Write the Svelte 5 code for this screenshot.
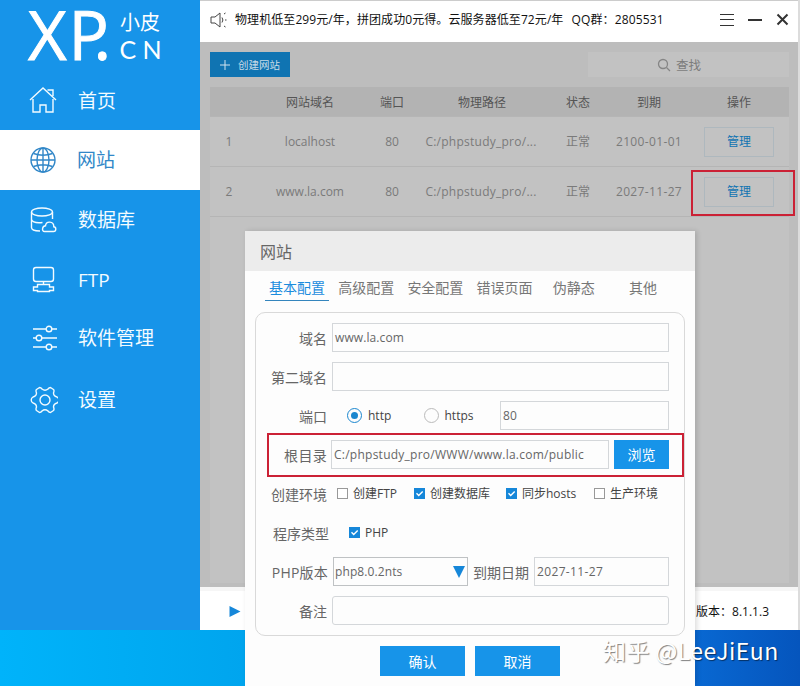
<script>
  const nav = [
    { id: 'home', label: '首页' },
    { id: 'site', label: '网站', active: true },
    { id: 'database', label: '数据库' },
    { id: 'ftp', label: 'FTP' },
    { id: 'software', label: '软件管理' },
    { id: 'settings', label: '设置' }
  ];

  const columns = ['', '网站域名', '端口', '物理路径', '状态', '到期', '操作'];

  const sites = [
    { id: 1, domain: 'localhost', port: 80, path: 'C:/phpstudy_pro/...', status: '正常', expires: '2100-01-01' },
    { id: 2, domain: 'www.la.com', port: 80, path: 'C:/phpstudy_pro/...', status: '正常', expires: '2027-11-27' }
  ];

  const tabs = ['基本配置', '高级配置', '安全配置', '错误页面', '伪静态', '其他'];

  const envs = [
    { label: '创建FTP', checked: false },
    { label: '创建数据库', checked: true },
    { label: '同步hosts', checked: true },
    { label: '生产环境', checked: false }
  ];

  let activeTab = $state(0);
  let protocol = $state('http');
</script>

{#snippet check(on)}
  <svg class="check" viewBox="0 0 11 11">
    {#if on}
      <rect width="11" height="11" fill="#1687d9" />
      <path d="M2.5 5.3 4.7 7.5 8.7 3.4" fill="none" stroke="#fff" stroke-width="1.4" />
    {:else}
      <rect x=".5" y=".5" width="10" height="10" fill="#fff" stroke="#999" />
    {/if}
  </svg>
{/snippet}

<div class="desktop">
  <div class="window">
    <aside class="sidebar">
      <svg class="logo" viewBox="0 0 200 70">
        <text class="xp" y="60"><tspan x="28">X</tspan><tspan x="68.500">P</tspan><tspan x="93.500">.</tspan></text>
        <text class="cn" x="120" y="30" textLength="40">小皮</text>
        <text class="latin" x="119.500" y="59" textLength="42">CN</text>
      </svg>
      <nav>
        {#each nav as item}
          <a class="item {item.id}" class:active={item.active} href="#{item.id}">
            <svg class="nav-icon" viewBox="0 0 30 30">
              {#if item.id === 'home'}
                <path d="M2 15 15 3l13 12M19.500 5h5.500v6M5 14v13h7v-7h6v7h7V14" />
              {:else if item.id === 'site'}
                <circle cx="15" cy="15" r="12" />
                <ellipse cx="15" cy="15" rx="6" ry="12" />
                <path d="M3 15h24M15 3v24M5.500 8.500Q15 12 24.500 8.500M5.500 21.500Q15 18 24.500 21.500" />
              {:else if item.id === 'database'}
                <ellipse cx="14" cy="7" rx="10.500" ry="4" />
                <path d="M3.500 7v15.500c0 2 3.500 3.500 8.500 3.500M24.500 7v7M3.500 14.500c1 3 6.500 3.500 11 3M16.500 26.500h9c3 0 3-4.500.3-4.700 0-6-7.800-6-8.300-1-3.500.2-4 5.700-1 5.700z" />
              {:else if item.id === 'ftp'}
                <rect x="5.500" y="2.500" width="20" height="14" rx="2.500" />
                <path d="M15.500 16.500v3M9.500 19.500h12v2.500h4v3.500h-4v1h-12v-1h-4V22h4z" />
              {:else if item.id === 'software'}
                <path d="M5 6h13M24 6h5M5 15h3M14 15h15M5 24h13M24 24h5" />
                <circle cx="21" cy="6" r="2.800" />
                <circle cx="11" cy="15" r="2.800" />
                <circle cx="21" cy="24" r="2.800" />
              {:else}
                <path d="M11.500 2.500Q13 2.500 14 4q3 2.500 6 0 1-1.500 2.500-1.500L25.500 4.500Q26.500 5.500 25.500 8q0 3 3.500 4 1.800 1 1.800 3t-1.800 3q-3.500 1-3.500 4 1 2.500 0 3.500l-3 2q-1.500 0-2.500-1.500-3-2.500-6 0-1 1.500-2.500 1.500l-3-2q-1-1 0-3.500 0-3-3.500-4-1.800-1-1.800-3t1.800-3q3.500-1 3.500-4-1-2.500 0-3.500z" stroke-linejoin="round" />
                <circle cx="17" cy="15" r="5" />
              {/if}
            </svg>
            <span>{item.label}</span>
          </a>
        {/each}
      </nav>
    </aside>

    <main>
      <header class="titlebar">
        <svg class="speaker" viewBox="0 0 17 16">
          <path d="M1 5h4l5-4v14l-5-4H1zM12 5.500q1.800 2.500 0 5" />
          <path d="M14 2l1.500-1M15 8h1.500M14 14l1.500 1" />
        </svg>
        <span class="notice">物理机低至299元/年，拼团成功0元得。云服务器低至72元/年</span>
        <span class="qq">QQ群：2805531</span>
        <svg class="controls" viewBox="0 0 70 14">
          <path d="M0 1.500h14M0 6.500h14M0 12.500h14" stroke-width="1" />
          <path d="M28 7h14" stroke-width="2" />
          <path d="M57.500 1.500l10 10M67.500 1.500l-10 10" stroke-width="2" />
        </svg>
      </header>

      <section class="content">
        <div class="toolbar">
          <button class="create">
            <svg viewBox="0 0 10 10"><path d="M5 0v10M0 5h10" /></svg>
            创建网站
          </button>
          <div class="search">
            <svg viewBox="0 0 14 14"><circle cx="6" cy="6" r="4.500" /><path d="M9.500 9.500 13 13" /></svg>
            <span>查找</span>
          </div>
        </div>

        <div class="table">
          <div class="row head">
            {#each columns as column}<span>{column}</span>{/each}
          </div>
          {#each sites as site}
            <div class="row">
              <span>{site.id}</span>
              <span>{site.domain}</span>
              <span>{site.port}</span>
              <span class="path">{site.path}</span>
              <span>{site.status}</span>
              <span class="expires">{site.expires}</span>
              <button class="manage">管理</button>
            </div>
          {/each}
        </div>
      </section>

      <footer>
        <svg class="play" viewBox="0 0 11 11"><path d="M0 0 11 5.500 0 11z" /></svg>
        <span>版本：8.1.1.3</span>
      </footer>
    </main>
  </div>

  <div class="dialog">
    <h2>网站</h2>
    <div class="tabs">
      {#each tabs as tab, i}
        <button class:current={activeTab === i} onclick={() => (activeTab = i)}>{tab}</button>
      {/each}
    </div>

    <div class="form">
      <div class="field">
        <span class="label">域名</span>
        <div class="input">www.la.com</div>
      </div>
      <div class="field">
        <span class="label">第二域名</span>
        <div class="input"></div>
      </div>
      <div class="field">
        <span class="label">端口</span>
        <div class="radios">
          {#each ['http', 'https'] as name}
            <button class="radio" class:on={protocol === name} onclick={() => (protocol = name)}>
              <i></i><span>{name}</span>
            </button>
          {/each}
        </div>
        <div class="input port">80</div>
      </div>
      <div class="field root">
        <span class="label">根目录</span>
        <div class="input">C:/phpstudy_pro/WWW/www.la.com/public</div>
        <button class="primary browse">浏览</button>
      </div>
      <div class="field">
        <span class="label">创建环境</span>
        <div class="envs">
          {#each envs as env}
            <span class="option">{@render check(env.checked)}<span>{env.label}</span></span>
          {/each}
        </div>
      </div>
      <div class="field type">
        <span class="label">程序类型</span>
        <span class="option">{@render check(true)}<span>PHP</span></span>
      </div>
      <div class="field version">
        <span class="label">PHP版本</span>
        <div class="input select">
          php8.0.2nts
          <svg viewBox="0 0 12 12"><path d="M0 0h12L6 12z" /></svg>
        </div>
        <span class="until">到期日期</span>
        <div class="input date">2027-11-27</div>
      </div>
      <div class="field">
        <span class="label">备注</span>
        <div class="input note"></div>
      </div>
    </div>

    <div class="actions">
      <button class="primary">确认</button>
      <button class="primary">取消</button>
    </div>
  </div>

  <div class="mark mark-manage"></div>
  <div class="mark mark-root"></div>
  <div class="watermark">知乎 @LeeJiEun</div>
</div>

<style>
  :global(body) {
    margin: 0;
  }

  .desktop,
  .desktop * {
    box-sizing: border-box;
  }

  .desktop {
    position: relative;
    width: 800px;
    height: 686px;
    overflow: hidden;
    background: linear-gradient(90deg, #00b3fa 0, #00a5ee 245px, #0969d3 690px, #0555bd 800px);
    font: 12px/1.2 'Open Sans', 'Noto Sans CJK SC', sans-serif;
    color: #666;
  }

  button {
    padding: 0;
    border: 0;
    background: none;
    color: inherit;
    font: inherit;
  }

  .window {
    display: flex;
    height: 630px;
  }

  .sidebar {
    width: 200px;
    background: #1794e9;
    color: #fff;
  }

  .logo {
    display: block;
    width: 200px;
    height: 70px;
    overflow: visible;
    fill: #fff;
  }

  .xp {
    font-size: 67px;
    stroke: #fff;
    stroke-width: 0.9px;
  }

  .cn {
    font-size: 20px;
  }

  .latin {
    font: 25px Lato, sans-serif;
  }

  .item {
    display: flex;
    align-items: center;
    height: 60px;
    padding-left: 28px;
    color: #f3fbff;
    font-size: 19px;
    text-decoration: none;
  }

  .item span {
    margin-left: 20px;
  }

  .item.home span {
    padding-top: 2px;
  }

  .item.active {
    background: #fff;
    color: #3187c8;
  }

  .item.active span {
    margin-left: 19px;
  }

  .item.software {
    padding-bottom: 4px;
  }

  .nav-icon {
    width: 30px;
    height: 30px;
    fill: none;
    stroke: currentColor;
    stroke-width: 1.4;
  }

  main {
    display: flex;
    flex-direction: column;
    width: 600px;
    border-right: 2px solid #dcdcdc;
    background: #fff;
  }

  .titlebar {
    display: flex;
    align-items: center;
    height: 42px;
    padding: 0 8px 3px 10px;
    border-top: 1px solid #ccc;
    color: #111;
    white-space: nowrap;
  }

  .speaker {
    width: 17px;
    height: 16px;
    margin-right: 8px;
    fill: none;
    stroke: #444;
  }

  .notice {
    letter-spacing: 0.08px;
  }

  .qq {
    margin-left: 8px;
    letter-spacing: 0.15px;
  }

  .controls {
    width: 70px;
    height: 14px;
    margin-left: auto;
    fill: none;
    stroke: #333;
  }

  .content {
    height: 545px;
    padding: 10px 9px 0 10px;
    background: #bdbdbd;
  }

  .toolbar {
    display: flex;
    justify-content: space-between;
    height: 35px;
  }

  .create {
    display: flex;
    align-items: center;
    gap: 8px;
    width: 80px;
    height: 25px;
    padding: 1px 0 0 10px;
    background: #1074b2;
    color: #c8dce8;
    font-size: 10.5px;
    white-space: nowrap;
  }

  .create svg {
    width: 10px;
    height: 10px;
    stroke: #d2e3ee;
  }

  .search {
    display: flex;
    align-items: center;
    justify-content: center;
    gap: 5px;
    width: 201px;
    height: 25px;
    padding-right: 19px;
    background: #c2c2c2;
    color: #7c7c7c;
    font-size: 12.5px;
  }

  .search span {
    padding-top: 2px;
  }

  .search svg {
    width: 14px;
    height: 14px;
    fill: none;
    stroke: #858585;
    stroke-width: 1.3;
  }

  .table {
    height: 496px;
    background: #c2c2c2;
  }

  .row {
    display: grid;
    grid-template-columns: 38px 124px 40px 140px 52px 90px 90px;
    align-items: center;
    height: 50px;
    border-bottom: 1px solid #b5b5b5;
    color: #7a7a7a;
    text-align: center;
    white-space: nowrap;
  }

  .row span {
    padding-top: 2px;
  }

  .row.head {
    height: 30px;
    background: #b3b3b3;
    color: #555;
  }

  .row.head span {
    padding-top: 3px;
  }

  .path {
    margin-left: -2px;
    letter-spacing: 0.25px;
  }

  .expires {
    letter-spacing: 0.35px;
  }

  .manage {
    width: 70px;
    height: 30px;
    margin: auto;
    padding-top: 2px;
    border: 1px solid #aeb8be;
    color: #1074b2;
  }

  footer {
    display: flex;
    align-items: center;
    justify-content: space-between;
    height: 43px;
    padding: 4px 29px 0;
    border-top: 4px solid #f6f6f6;
    color: #111;
  }

  .play {
    width: 12px;
    height: 11px;
    margin-bottom: 3px;
    fill: #1687d9;
  }

  .dialog {
    position: absolute;
    left: 245px;
    top: 231px;
    width: 450px;
    height: 455px;
    background: #fdfdfd;
    box-shadow: 2px 0 5px rgba(0, 0, 0, 0.14);
  }

  h2 {
    display: flex;
    align-items: center;
    height: 40px;
    margin: 0;
    padding: 4px 15px 0;
    background: #ececec;
    color: #666;
    font-size: 16px;
    font-weight: 400;
  }

  .tabs {
    display: flex;
    justify-content: space-between;
    height: 30px;
    padding: 0 20px;
    color: #777;
    font-size: 14px;
  }

  .tabs button {
    width: 64px;
    padding-top: 5px;
    border-bottom: 1px solid transparent;
    white-space: nowrap;
  }

  .tabs .current {
    border-color: #3485bd;
    color: #1b8cdd;
  }

  .form {
    height: 324px;
    margin: 11px 10px 0;
    padding: 5px 15px 0 0;
    border: 1px solid #d9d9d9;
    border-radius: 10px;
  }

  .field {
    display: flex;
    align-items: center;
    height: 39px;
  }

  .label {
    width: 71px;
    margin-right: 5px;
    padding-top: 3px;
    font-size: 14px;
    text-align: right;
    white-space: nowrap;
  }

  .input {
    display: flex;
    flex: 1;
    align-items: center;
    height: 29px;
    padding: 2px 0 0 2px;
    border: 1px solid #d4d7da;
    letter-spacing: 0.1px;
    white-space: nowrap;
  }

  .radios {
    display: flex;
    flex: none;
    width: 168px;
    padding-left: 15px;
    color: #444;
  }

  .radio {
    display: flex;
    align-items: center;
    gap: 6px;
    width: 77px;
  }

  .radio span {
    padding-top: 2px;
  }

  .radio i {
    display: flex;
    width: 15px;
    height: 15px;
    border: 1px solid #bbb;
    border-radius: 50%;
  }

  .radio.on i {
    border-color: #1b87cf;
  }

  .radio.on i::before {
    width: 7px;
    height: 7px;
    margin: auto;
    border-radius: 50%;
    background: #1b87cf;
    content: '';
  }

  .root .label {
    margin-right: 4px;
    letter-spacing: 0.3px;
  }

  .root .input {
    letter-spacing: 0.25px;
  }

  .primary {
    width: 85px;
    height: 30px;
    padding-top: 2px;
    background: #1794e9;
    color: #fff;
    font-size: 14px;
  }

  .primary.browse {
    width: 55px;
    height: 29px;
    margin-left: 5px;
  }

  .envs {
    display: grid;
    grid-template-columns: 77px 92px 88px auto;
    padding-left: 5px;
  }

  .option {
    display: flex;
    align-items: center;
    gap: 5px;
    color: #444;
    white-space: nowrap;
  }

  .option span {
    padding-top: 2px;
  }

  .check {
    width: 11px;
    height: 11px;
  }

  .type .label {
    width: 73px;
    margin-right: 20px;
  }

  .version .label {
    width: 72px;
    letter-spacing: 0.2px;
  }

  .select {
    flex: none;
    justify-content: space-between;
    width: 135px;
    padding: 2px 2px 0 1px;
    border-color: #bfc2c4;
  }

  .select svg {
    width: 12px;
    height: 12px;
    margin-bottom: 2px;
    fill: #1687d9;
  }

  .until {
    margin: 3px 5px 0;
    font-size: 14px;
    white-space: nowrap;
  }

  .version .date {
    letter-spacing: 0.35px;
  }

  .note {
    border-radius: 3px;
  }

  .actions {
    display: flex;
    justify-content: center;
    gap: 10px;
    padding-top: 10px;
  }

  /* red annotation frames */
  .mark {
    position: absolute;
    border: 2px solid #cb2135;
  }

  .mark-manage {
    left: 691px;
    top: 170px;
    width: 104px;
    height: 46px;
  }

  .mark-root {
    left: 267px;
    top: 433px;
    width: 417px;
    height: 44px;
  }

  .watermark {
    position: absolute;
    left: 603px;
    top: 636px;
    color: #fff;
    font: 23px/28px 'Noto Sans CJK SC', sans-serif;
    letter-spacing: 0.45px;
    text-shadow: 1px 1px 1px rgba(0, 0, 0, 0.5);
    white-space: nowrap;
  }
</style>
